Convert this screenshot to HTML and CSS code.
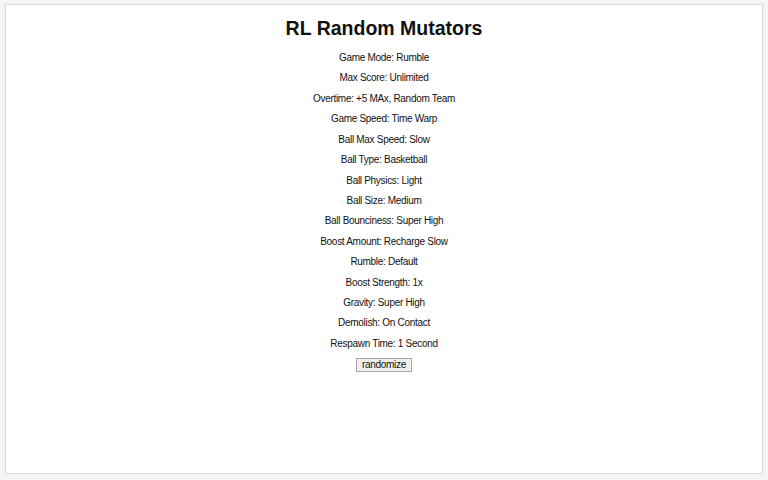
FILE: index.html
```html
<html>
<head>
  <meta charset="UTF-8">
  <title>RL Random Mutators</title>
  <link rel="stylesheet" href="styles.css">
</head>
<body>

  <div class="panel">
    <h1>RL Random Mutators</h1>

    <div class="mutators">
      <p>Game Mode: Rumble</p>
      <p>Max Score: Unlimited</p>
      <p>Overtime: +5 MAx, Random Team</p>
      <p>Game Speed: Time Warp</p>
      <p>Ball Max Speed: Slow</p>
      <p>Ball Type: Basketball</p>
      <p>Ball Physics: Light</p>
      <p>Ball Size: Medium</p>
      <p>Ball Bounciness: Super High</p>
      <p>Boost Amount: Recharge Slow</p>
      <p>Rumble: Default</p>
      <p>Boost Strength: 1x</p>
      <p>Gravity: Super High</p>
      <p>Demolish: On Contact</p>
      <p>Respawn Time: 1 Second</p>
    </div>

    <button class="btn-random">randomize</button>
  </div>

</body>
</html>
```

FILE: styles.css
```css
body {
  background-color: #f4f4f4;
  margin: 4px 5px;
  font-family: 'Liberation Sans', Arial, sans-serif;
  color: #111;
}

.panel {
  background-color: white;
  border: 1px solid #dcdcdc;
  height: 470px;
  box-sizing: border-box;
  text-align: center;
  padding-top: 12px;
}

h1 {
  font-size: 19.5px;
  font-weight: bold;
  margin: 0 0 13px 0;
  line-height: 22px;
}

.mutators p {
  font-size: 10px;
  letter-spacing: -0.3px;
  line-height: 12px;
  margin: 0 0 8.43px 0;
}

.btn-random {
  display: block;
  margin: 3px auto 0;
  font-family: 'Liberation Sans', Arial, sans-serif;
  font-size: 10px;
  letter-spacing: -0.3px;
  line-height: 12px;
  padding: 0 5px;
  background-color: #f0f0f0;
  border: 1px solid #a8a8a8;
  border-radius: 0;
  color: #111;
}
```
